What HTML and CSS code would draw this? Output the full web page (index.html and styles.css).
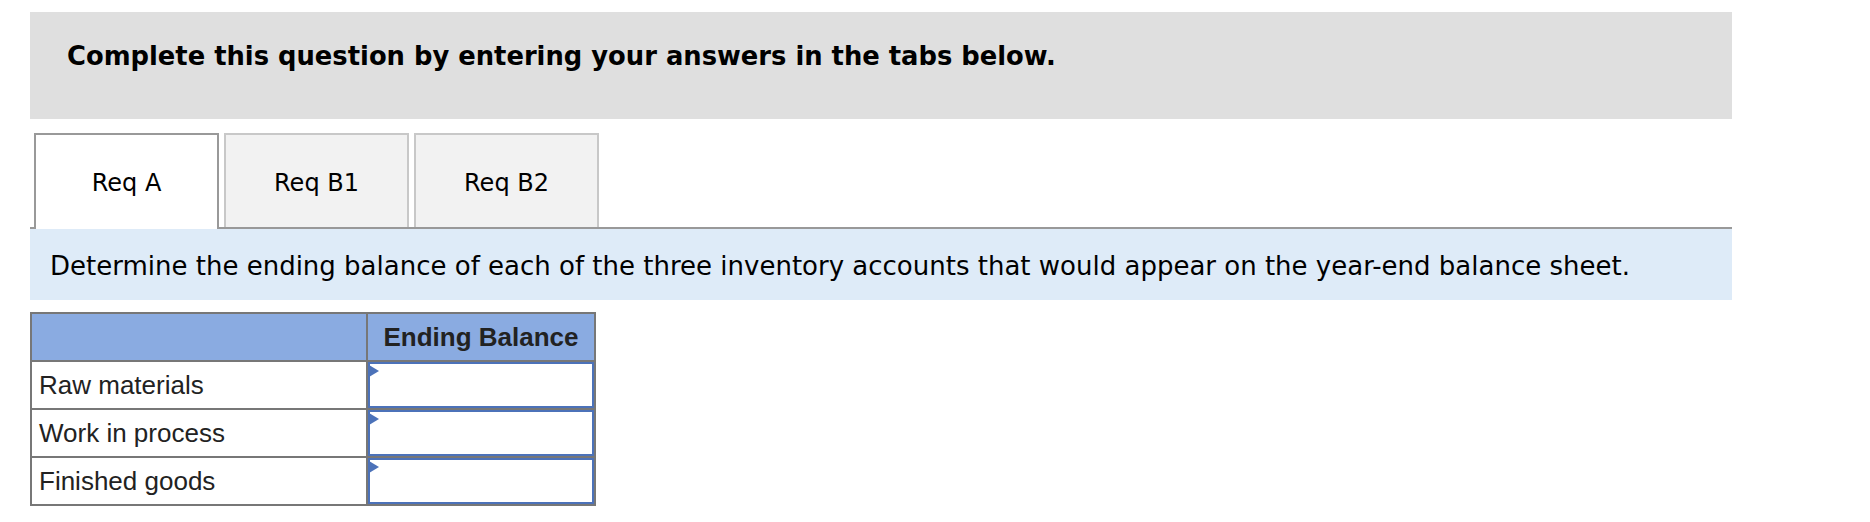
FILE: index.html
```html
<!DOCTYPE html>
<html lang="en">
<head>
<meta charset="utf-8">
<title>Req A</title>
<link rel="stylesheet" href="styles.css">
</head>
<body>
<div class="page">
  <div class="question-header">Complete this question by entering your answers in the tabs below.</div>
  <div class="tab-strip">
    <div class="tab tab-active">Req A</div>
    <div class="tab">Req B1</div>
    <div class="tab">Req B2</div>
  </div>
  <div class="instruction">Determine the ending balance of each of the three inventory accounts that would appear on the year-end balance sheet.</div>
  <div class="answer-grid">
    <div class="cell head-cell"></div>
    <div class="cell head-cell head-label">Ending Balance</div>
    <div class="cell label-cell">Raw materials</div>
    <div class="cell input-cell"><span class="marker"></span></div>
    <div class="cell label-cell">Work in process</div>
    <div class="cell input-cell"><span class="marker"></span></div>
    <div class="cell label-cell">Finished goods</div>
    <div class="cell input-cell"><span class="marker"></span></div>
  </div>
</div>
</body>
</html>
```
FILE: styles.css
```css
html, body {
  margin: 0;
  padding: 0;
  background: #ffffff;
}
.page {
  padding: 12px 0 0 30px;
  width: 1702px;
  font-family: "DejaVu Sans", Verdana, sans-serif;
  color: #000;
}
.question-header {
  height: 107px;
  box-sizing: border-box;
  background: #dfdfdf;
  padding: 29px 0 0 37px;
  font-weight: bold;
  font-size: 25.8px;
  line-height: 30px;
}
.tab-strip {
  margin-top: 14px;
  display: flex;
  gap: 5px;
  align-items: flex-end;
  padding-left: 4px;
  border-bottom: 2px solid #999999;
  height: 94px;
}
.tab {
  width: 185px;
  height: 94px;
  box-sizing: border-box;
  border: 2px solid #c8c8c8;
  border-bottom: none;
  background: #f2f2f2;
  display: flex;
  align-items: center;
  justify-content: center;
  font-size: 24px;
  padding-top: 4px;
}
.tab-active {
  height: 96px;
  margin-bottom: -2px;
  border-color: #999999;
  background: #ffffff;
  padding-top: 2px;
}
.instruction {
  height: 71px;
  box-sizing: border-box;
  background: #deebf8;
  padding: 22px 0 0 20px;
  font-size: 26px;
  line-height: 30px;
}
.answer-grid {
  margin-top: 12px;
  display: grid;
  grid-template-columns: 334px 226px;
  grid-auto-rows: 46px;
  gap: 2px;
  padding: 2px;
  background: #777777;
  width: max-content;
  font-family: "Liberation Sans", Arial, sans-serif;
  font-size: 26px;
  color: #222;
}
.cell {
  background: #ffffff;
  display: flex;
  align-items: center;
}
.head-cell {
  background: #8aabe1;
}
.head-label {
  justify-content: center;
  font-weight: bold;
  color: #222;
}
.label-cell {
  padding-left: 7px;
}
.input-cell {
  position: relative;
  border: 2px solid #4c72b9;
  box-sizing: border-box;
}
.marker {
  position: absolute;
  left: -1px;
  top: 1px;
  width: 0;
  height: 0;
  border-top: 6px solid transparent;
  border-bottom: 6px solid transparent;
  border-left: 10px solid #4c72b9;
}
```
